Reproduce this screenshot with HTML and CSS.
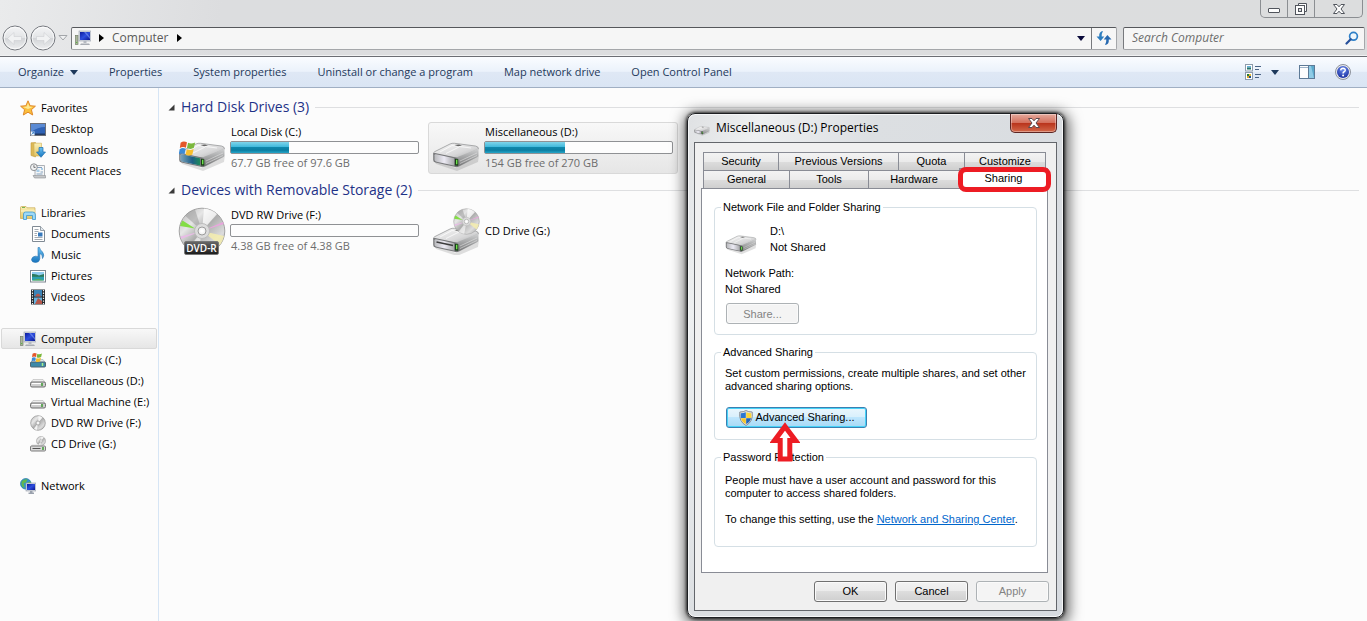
FILE: index.html
```html
<!DOCTYPE html>
<html lang="en">
<head>
    <meta charset="UTF-8">
    <meta name="viewport" content="width=device-width, initial-scale=1.0">
    <title>Computer</title>
    <link rel="stylesheet" href="styles.css">
</head>
<body>
    <!-- Shared icons and gradients -->
    <svg class="sprite" aria-hidden="true">
        <defs>
            <linearGradient id="gMetal" x1="0" y1="0" x2="1" y2="1">
                <stop offset="0" stop-color="#f8f8f8"/>
                <stop offset="0.6" stop-color="#d8d8d9"/>
                <stop offset="1" stop-color="#a5a6a7"/>
            </linearGradient>
            <linearGradient id="gSide" x1="0" y1="0" x2="0" y2="1">
                <stop offset="0" stop-color="#d2d3d4"/>
                <stop offset="1" stop-color="#707172"/>
            </linearGradient>
            <linearGradient id="gFront" x1="0" y1="0" x2="1" y2="0">
                <stop offset="0" stop-color="#b9babd"/>
                <stop offset="0.5" stop-color="#eceaf4"/>
                <stop offset="1" stop-color="#a9aaac"/>
            </linearGradient>
            <linearGradient id="gTeal" x1="0" y1="0" x2="1" y2="0">
                <stop offset="0" stop-color="#7ba3bb"/>
                <stop offset="0.6" stop-color="#1e5f86"/>
                <stop offset="1" stop-color="#1d8a5c"/>
            </linearGradient>
            <linearGradient id="gDisc" x1="0" y1="0" x2="1" y2="1">
                <stop offset="0" stop-color="#b4b4b4"/>
                <stop offset="0.3" stop-color="#e6e6e6"/>
                <stop offset="0.5" stop-color="#aeaeae"/>
                <stop offset="0.75" stop-color="#dcdcdc"/>
                <stop offset="1" stop-color="#9c9c9c"/>
            </linearGradient>
            <linearGradient id="gBlue" x1="0" y1="0" x2="1" y2="1">
                <stop offset="0" stop-color="#0b1a9c"/>
                <stop offset="0.5" stop-color="#2d4ede"/>
                <stop offset="1" stop-color="#0b1792"/>
            </linearGradient>
            <linearGradient id="gFolder" x1="0" y1="0" x2="0" y2="1">
                <stop offset="0" stop-color="#fbf0b5"/>
                <stop offset="1" stop-color="#e3c566"/>
            </linearGradient>
            <linearGradient id="gSky" x1="0" y1="0" x2="0" y2="1">
                <stop offset="0" stop-color="#6cc3f3"/>
                <stop offset="1" stop-color="#1774bd"/>
            </linearGradient>
            <linearGradient id="gNav" x1="0" y1="0" x2="0" y2="1">
                <stop offset="0" stop-color="#f4f5f6"/>
                <stop offset="0.5" stop-color="#e2e4e6"/>
                <stop offset="0.52" stop-color="#d3d5d8"/>
                <stop offset="1" stop-color="#eff0f1"/>
            </linearGradient>
            <radialGradient id="gHelp" cx="0.5" cy="0.3" r="0.7">
                <stop offset="0" stop-color="#6d8ff0"/>
                <stop offset="1" stop-color="#1a2fa0"/>
            </radialGradient>
        </defs>

        <symbol id="flag" viewBox="0 0 16 16">
            <path d="M1.5 2.5C3.5 1 5.500 1 7.500 2.200L6.500 7.300C4.500 6.200 2.600 6.300.8 7.600Z" fill="#e4572a"/>
            <path d="M8.500 2.600C10.500 3.700 12.700 3.600 15.200 2.300L14 7.400C11.800 8.700 9.500 8.600 7.500 7.600Z" fill="#7bb83c"/>
            <path d="M.6 8.700C2.500 7.300 4.300 7.300 6.300 8.300L5.200 13.400C3.400 12.300 1.500 12.500-.3 13.700Z" fill="#3c8bd6"/>
            <path d="M7.300 8.700C9.300 9.700 11.400 9.800 13.800 8.500L12.600 13.600C10.400 14.900 8.200 14.800 6.200 13.800Z" fill="#f7bf2e"/>
        </symbol>

        <symbol id="drive-large" viewBox="0 0 48 48">
            <path d="M2 36L24 44 47 31 46 38 25 47 4 40Z" fill="#000" opacity="0.12"/>
            <path d="M1.500 30Q1 28.500 3 27.500L18 20Q20 19 22.500 19.300L43.500 22Q46.500 22.500 46.500 25L26 34.500Z" fill="url(#gMetal)" stroke="#8d8e8f" stroke-width="0.7"/>
            <path d="M23 34L46.500 24.500V31Q46.500 32.500 44.500 33.500L27 42.500Q25 43.500 23 43Z" fill="url(#gSide)"/>
            <path d="M1.200 30Q1.200 28.600 3 29L24 33.500Q26 34 26 35.500V41Q26 43.500 23.500 43L3.500 38.500Q1.200 38 1.200 36Z" fill="#77787a"/>
            <path d="M2.500 31.200Q2.500 30 4 30.300L22 34.200V41.500L4.500 37.700Q2.500 37.200 2.500 36Z" fill="url(#gFront)"/>
            <path d="M23 34.800L26.300 35.300V41.800L23 41.400Z" fill="#183f16"/>
            <path d="M24 35.800h1.400v4.500H24z" fill="#6fe04d"/>
            <path d="M8 28L20 21.500 39 24M14 29.500L27 23" fill="none" stroke="#fff" stroke-width="0.900" opacity="0.800"/>
            <path d="M22.500 21L27 20.600 30 21.400 26 22.300Z" fill="#666"/>
            <path d="M28 37L45 29M28 39.500L45 31.500" stroke="#e6e6e6" stroke-width="0.800" opacity="0.700"/>
        </symbol>

        <symbol id="drive-windows-large" viewBox="0 0 48 48">
            <use href="#drive-large"/>
            <path d="M2.500 31.200Q2.500 30 4 30.300L22 34.200V41.500L4.500 37.700Q2.500 37.200 2.500 36Z" fill="url(#gTeal)"/>
            <use href="#flag" x="1" y="16" width="17" height="17"/>
        </symbol>

        <symbol id="disc" viewBox="0 0 48 48">
            <circle cx="24" cy="24" r="22.800" fill="url(#gDisc)" stroke="#9b9b9b" stroke-width="0.900"/>
            <path d="M24 24L7 8.500A23 23 0 0 1 17 2.500Z" fill="#8d8d8d" opacity="0.450"/>
            <path d="M24 24L26 1.500A23 23 0 0 1 39 7Z" fill="#fff" opacity="0.750"/>
            <path d="M17 21.500L2 19A23 23 0 0 1 4.500 13.500Z" fill="#83dd45"/>
            <path d="M24 24L45 15 45.800 17Z" fill="#e9a5dd"/>
            <path d="M24 24L46 29A23 23 0 0 1 42 38Z" fill="#f4edae" opacity="0.850"/>
            <path d="M24 24L3 32 2.500 29.500Z" fill="#e8bce6"/>
            <path d="M24 24L10 42A23 23 0 0 0 20 46.400Z" fill="#fff" opacity="0.600"/>
            <circle cx="24" cy="24" r="7.500" fill="#dcdcdc" stroke="#bcbcbc"/>
            <circle cx="24" cy="24" r="4" fill="#f4f4f4" stroke="#9c9c9c"/>
            <circle cx="24" cy="24" r="1.800" fill="#fff"/>
        </symbol>

        <symbol id="cd-drive-large" viewBox="0 0 48 48">
            <use href="#drive-large" y="2"/>
            <path d="M4.500 35L21 38.500" stroke="#3c3c3c" stroke-width="1.600"/>
            <use href="#disc" x="21" y="1" width="27" height="27"/>
        </symbol>

        <symbol id="drive" viewBox="0 0 16 16">
            <path d="M3 6.500H13L15.500 10H.5Z" fill="#eeeeee" stroke="#b5b5b5" stroke-width="0.600"/>
            <rect x="0.500" y="9" width="15" height="5" rx="1.500" fill="#cfcfcf" stroke="#6f6f6f"/>
            <path d="M2 10.500h9" stroke="#fff"/>
            <path d="M12 10v3" stroke="#3e9a35" stroke-width="1.500"/>
        </symbol>

        <symbol id="drive-windows" viewBox="0 0 16 16">
            <path d="M3 7.500H13L15.500 11H.5Z" fill="#dfe6ea" stroke="#9fb0ba" stroke-width="0.600"/>
            <rect x="0.500" y="10" width="15" height="5" rx="1" fill="#3c89a8" stroke="#4f6470"/>
            <path d="M12.500 11v3" stroke="#a8f08d" stroke-width="1.500"/>
            <use href="#flag" x="1.500" y="0" width="11" height="11"/>
        </symbol>

        <symbol id="disc-small" viewBox="0 0 16 16">
            <circle cx="8" cy="8" r="7.300" fill="url(#gDisc)" stroke="#8f8f8f" stroke-width="0.700"/>
            <path d="M8 8L8.500 1A7 7 0 0 1 12.500 2.500ZM8 8L4 13.800A7 7 0 0 0 7 15Z" fill="#fff" opacity="0.800"/>
            <circle cx="8" cy="8" r="2" fill="#f6f6f6" stroke="#9c9c9c" stroke-width="0.800"/>
        </symbol>

        <symbol id="cd-drive" viewBox="0 0 16 16">
            <use href="#disc-small" x="6" y="0" width="10" height="10"/>
            <path d="M2 8.500H9L15.500 10.500H.5Z" fill="#e4e4e4"/>
            <rect x="0.500" y="10" width="15" height="5" rx="1" fill="#dadada" stroke="#7d7d7d"/>
            <path d="M2.500 12.500h8" stroke="#555"/>
            <path d="M13 11v3" stroke="#3e9a35" stroke-width="1.500"/>
        </symbol>

        <symbol id="computer" viewBox="0 0 16 16">
            <rect x="0.500" y="5.500" width="2.500" height="9" fill="#a9b49c" stroke="#75806a" stroke-width="0.700"/>
            <path d="M1.200 12.500h1" stroke="#4dbb32"/>
            <rect x="4" y="1" width="12" height="10" fill="#d5d9e0" stroke="#9aa1ad" stroke-width="0.600"/>
            <rect x="5" y="2" width="10" height="8" fill="url(#gBlue)"/>
            <path d="M9 2L11 2 15 7V9Z" fill="#7f9bf5" opacity="0.600"/>
            <path d="M8.500 11h3v2h-3z" fill="#b5b9c0"/>
            <path d="M6 13.500h8l1 1.500H5z" fill="#a8acb3"/>
        </symbol>

        <symbol id="star" viewBox="0 0 16 16">
            <path d="M8 .8L10.100 5.700 15.400 6.200 11.400 9.700 12.700 15 8 12.200 3.300 15 4.600 9.700.6 6.200 5.900 5.700Z" fill="#fbbf3c" stroke="#e0892a" stroke-width="1"/>
            <path d="M8 3L9.300 6.600 13 7 8 9 3 7 6.700 6.600Z" fill="#fdf0a3" opacity="0.850"/>
        </symbol>

        <symbol id="desktop" viewBox="0 0 16 16">
            <rect x="0.500" y="2.500" width="15" height="12" fill="#2f62b5" stroke="#6d7078"/>
            <path d="M1 3H15V6Q8 6 1 11Z" fill="#6e9be0" opacity="0.700"/>
            <path d="M5 12.500H15V14H5z" fill="#233b62"/>
            <path d="M.8 10.500h3.700v4H.8z" fill="#eef5fc"/>
            <path d="M1.500 13.500L3.800 11.300M2.200 11.200h1.700v1.700" fill="none" stroke="#2976c4" stroke-width="0.800"/>
        </symbol>

        <symbol id="downloads" viewBox="0 0 16 16">
            <path d="M1 .8L5.500.5V15L1 13.500Z" fill="#ddb956" stroke="#c39c3c" stroke-width="0.600"/>
            <path d="M4 1.200H11.500V14H4Z" fill="url(#gFolder)" stroke="#cfae55" stroke-width="0.600"/>
            <path d="M9 5.500H13V10H15.500L11 15.300 6.500 10H9Z" fill="url(#gSky)" stroke="#1c6eaf" stroke-width="0.700"/>
        </symbol>

        <symbol id="recent" viewBox="0 0 16 16">
            <path d="M5 2.500h9.500v11H5z" fill="#f5f6f7" stroke="#9aa0a6" stroke-width="0.800"/>
            <path d="M6.500 6.500h3v2.500h-3zM11 5h2v2h-2z" fill="#a8cde9"/>
            <path d="M7 4.500h5M10.500 9h2.500M6.500 11h6" stroke="#7997b5" stroke-width="0.900"/>
            <path d="M3 12.500h12.500v2.500H4.500z" fill="#c5c7c9" stroke="#8c8f92" stroke-width="0.600"/>
            <circle cx="3.900" cy="4.200" r="3.400" fill="#f1f2f3" stroke="#8c8f92"/>
            <path d="M3.900 2.200v2.200h1.700" fill="none" stroke="#555" stroke-width="0.800"/>
        </symbol>

        <symbol id="libraries" viewBox="0 0 16 16">
            <path d="M.5 2.500Q.5 1.500 1.500 1.500H6L7 2.800H15V13.500H.5Z" fill="url(#gFolder)" stroke="#c9a94f" stroke-width="0.700"/>
            <path d="M2 2.500h3" stroke="#77b454"/>
            <path d="M1 6H15" stroke="#fff7cf"/>
            <path d="M3.500 14.500V9Q3.500 7 5.500 7H12.500Q14.800 7 15.300 9L15.500 14.500H12.500V10.500H6.500V14.500Z" fill="#9dd9f7" stroke="#3c97cf" stroke-width="0.800"/>
        </symbol>

        <symbol id="documents" viewBox="0 0 16 16">
            <path d="M2.500.5H10.500L14.500 4.500V15.500H2.500Z" fill="#fff" stroke="#808a94"/>
            <path d="M10.500.5V4.500H14.500" fill="#e4e9ee" stroke="#808a94" stroke-width="0.800"/>
            <path d="M4.500 3.500h4M4.500 5.500h4M4.500 7.500h2.500M4.500 9.500h2.500M4.500 11.500h8M4.500 13.500h8" stroke="#9aa3ab" stroke-width="0.900"/>
            <path d="M8 6.500h4.500v4H8z" fill="#3779bc"/>
        </symbol>

        <symbol id="music" viewBox="0 0 16 16">
            <path d="M8 .5H9.500Q10 3 12.500 5Q15 8 12.500 11.500Q13 7.500 9.800 6.500V11.800Q9.500 15.500 5.500 15.500Q1.500 15.300 1.500 12.500Q2 9.500 5.500 9.200Q7 9.200 8 9.800Z" fill="url(#gSky)" stroke="#2672b2" stroke-width="0.600"/>
        </symbol>

        <symbol id="pictures" viewBox="0 0 16 16">
            <rect x="0.500" y="2.500" width="15" height="11.500" fill="#fff" stroke="#808891"/>
            <path d="M2 4h12v4.500H2z" fill="#8fcbee"/>
            <path d="M2 6Q6 5.500 9 7.500L14 6V9H2Z" fill="#2c7a5c"/>
            <path d="M2 8.800h12v3.700H2z" fill="#2d9fae"/>
            <path d="M2 12.500Q8 9.500 14 12.500Z" fill="#5fae54"/>
        </symbol>

        <symbol id="videos" viewBox="0 0 16 16">
            <rect x="1" y="0.500" width="14" height="15" fill="#22282d"/>
            <path d="M4 1h8v6.500H4z" fill="#3b84b8"/>
            <path d="M4 8.500h8V15H4z" fill="#68b3dd"/>
            <path d="M5 7.500Q8 1.500 11 7.500ZM8 9L12 12V15H5Z" fill="#b5584c"/>
            <path d="M2.500 1v15M13.500 1v15" stroke="#f2f2f2" stroke-width="1.200" stroke-dasharray="1.300 1.300"/>
        </symbol>

        <symbol id="network" viewBox="0 0 16 16">
            <circle cx="5.800" cy="5.800" r="5.300" fill="#3193cc" stroke="#2177a5" stroke-width="0.700"/>
            <path d="M2 3Q5 .5 7.500 1.500L6 4.500 3.500 5.500 4.500 9 3 9.500Q.5 6.500 2 3ZM8 4L10.500 3.500 11 6 8 8Z" fill="#62b84c"/>
            <rect x="6" y="5" width="10" height="8" fill="#d5d9e0" stroke="#8f97a5" stroke-width="0.600"/>
            <path d="M7 6h8v6H7z" fill="url(#gBlue)"/>
            <path d="M10 13h2.500v1.500H14V16H8.500V14.500H10z" fill="#9aa1ad"/>
        </symbol>

        <symbol id="shield" viewBox="0 0 16 16">
            <path d="M8 .6Q10.500 2 14.200 2Q15.500 11.500 8 15.500Q.5 11.500 1.800 2Q5.500 2 8 .6Z" fill="#e4e6e8" stroke="#80868b" stroke-width="0.900"/>
            <path d="M7.800 2.200V7.900H2.800Q2.500 5.500 2.800 3.300Q5.500 3.300 7.800 2.200Z" fill="#2a77d2"/>
            <path d="M8.200 2.200Q10.500 3.300 13.200 3.300Q13.500 5.500 13.200 7.900H8.200Z" fill="#fbd53a"/>
            <path d="M2.900 8.300H7.800V14.100Q3.800 12 2.900 8.300Z" fill="#f6c62a"/>
            <path d="M8.200 8.300H13.100Q12.200 12 8.200 14.100Z" fill="#2263bb"/>
        </symbol>
    </svg>

    <!-- Window frame with the address and search boxes -->
    <header class="frame">
        <div class="caption-buttons">
            <button type="button" aria-label="Minimize">
                <svg width="14" height="8" viewBox="0 0 14 8"><rect x="1.500" y="3.500" width="11" height="4" rx="0.500" fill="#fdfdfd" stroke="#50545c"/></svg>
            </button>
            <button type="button" aria-label="Restore">
                <svg width="14" height="14" viewBox="0 0 14 14"><path d="M4.500 3.500V1.500H12.500V9.500H10.500" fill="#fdfdfd" stroke="#50545c"/><rect x="1.500" y="3.500" width="9" height="9" fill="#fdfdfd" stroke="#50545c"/><rect x="4.500" y="6.500" width="3" height="3" fill="#dcdddf" stroke="#50545c"/></svg>
            </button>
            <button type="button" class="caption-close" aria-label="Close">
                <svg width="14" height="12" viewBox="0 0 14 12"><path d="M1.500 1.500H5L7 3.800 9 1.500H12.500L9 6 12.500 10.500H9L7 8.200 5 10.500H1.500L5 6Z" fill="#fdfdfd" stroke="#50545c"/></svg>
            </button>
        </div>

        <div class="address-row">
            <div class="nav-buttons">
                <button type="button" aria-label="Back">
                    <svg width="26" height="26" viewBox="0 0 26 26"><circle cx="13" cy="13" r="12" fill="url(#gNav)" stroke="#777a80"/><circle cx="13" cy="13" r="10.800" fill="none" stroke="#fff" opacity="0.700"/><path d="M5.500 13.500L12 7.500V11.500H19.500V15.500H12V19.500Z" fill="#f1f2f3" stroke="#c9cbce" stroke-width="0.500"/></svg>
                </button>
                <button type="button" aria-label="Forward">
                    <svg width="26" height="26" viewBox="0 0 26 26"><circle cx="13" cy="13" r="12" fill="url(#gNav)" stroke="#777a80"/><circle cx="13" cy="13" r="10.800" fill="none" stroke="#fff" opacity="0.700"/><path d="M20.500 13.500L14 7.500V11.500H6.500V15.500H14V19.500Z" fill="#f1f2f3" stroke="#c9cbce" stroke-width="0.500"/></svg>
                </button>
                <button type="button" class="nav-recent" aria-label="Recent pages">
                    <svg width="10" height="8" viewBox="0 0 10 8"><path d="M1 1.500H9L5 6Z" fill="#f0f1f2" stroke="#a3a6aa"/></svg>
                </button>
            </div>

            <div class="address-box">
                <svg class="icon" aria-hidden="true"><use href="#computer"/></svg>
                <svg class="crumb-arrow" viewBox="0 0 5 8" aria-hidden="true"><path d="M0 0L5 4 0 8Z"/></svg>
                <button type="button" class="crumb">Computer</button>
                <svg class="crumb-arrow" viewBox="0 0 5 8" aria-hidden="true"><path d="M0 0L5 4 0 8Z"/></svg>
                <button type="button" class="address-drop" aria-label="Previous locations">
                    <svg width="8" height="5" viewBox="0 0 8 5"><path d="M0 0H8L4 5Z" fill="#0a0a3a"/></svg>
                </button>
                <button type="button" class="refresh" aria-label="Refresh">
                    <svg width="16" height="14" viewBox="0 0 16 14"><path d="M7 0Q2.800.5 3.200 5.500H.5L4.600 10 8.300 5.500H5.700Q5.500 2.500 7 0Z" fill="#2c7dbf"/><path d="M9 14Q13.200 13.500 12.800 8.500H15.500L11.400 4 7.700 8.500H10.300Q10.500 11.500 9 14Z" fill="#2769b0"/></svg>
                </button>
            </div>

            <label class="search-box">
                <input type="text" placeholder="Search Computer" aria-label="Search Computer">
                <svg width="14" height="14" viewBox="0 0 14 14" aria-hidden="true"><circle cx="8.500" cy="5.300" r="3.900" fill="#eef6fc" stroke="#2f80c8" stroke-width="1.700"/><path d="M5.700 8.200L1.500 12.500" stroke="#27509a" stroke-width="2.200" stroke-linecap="round"/></svg>
            </label>
        </div>
    </header>

    <!-- Command bar -->
    <nav class="toolbar">
        <button type="button" class="organize">Organize
            <svg width="8" height="5" viewBox="0 0 8 5" aria-hidden="true"><path d="M0 0H8L4 5Z" fill="#1e395b"/></svg>
        </button>
        <button type="button">Properties</button>
        <button type="button">System properties</button>
        <button type="button">Uninstall or change a program</button>
        <button type="button">Map network drive</button>
        <button type="button">Open Control Panel</button>
        <div class="toolbar-right">
            <button type="button" class="views" aria-label="Change your view">
                <svg width="16" height="16" viewBox="0 0 16 16"><rect x="0.500" y="0.500" width="7" height="6.500" fill="#fff" stroke="#8d9bab"/><path d="M2 2h4v1.500H2z" fill="#63b0da"/><path d="M2 3.500h4v2H2z" fill="#27756b"/><rect x="0.500" y="8.500" width="7" height="7" fill="#fff" stroke="#8d9bab"/><path d="M2 10h2v2H2z" fill="#267a37"/><path d="M4 10h2v2H4z" fill="#e8b930"/><path d="M2 12h2v2H2z" fill="#dda32c"/><path d="M4 12h2v2H4z" fill="#1d4d87"/><path d="M10 2.500h6M10 5.500h4M10 10.500h6M10 13.500h4" stroke="#4a6385"/></svg>
                <svg width="8" height="5" viewBox="0 0 8 5"><path d="M0 0H8L4 5Z" fill="#1e395b"/></svg>
            </button>
            <button type="button" aria-label="Show the preview pane">
                <svg width="16" height="14" viewBox="0 0 16 14"><rect x="0.500" y="0.500" width="15" height="13" fill="#fdfdfe" stroke="#5d7a97"/><path d="M1 2.500h9" stroke="#9db4ca"/><path d="M10 1h5v12h-5z" fill="#8fcbe6"/><path d="M9.500 1v12" stroke="#5d7a97"/><path d="M12 1L15 1V13Z" fill="#5ba9cc"/></svg>
            </button>
            <button type="button" aria-label="Get help">
                <svg width="16" height="16" viewBox="0 0 16 16"><circle cx="8" cy="8" r="7.500" fill="#e7e9ee" stroke="#8d929c"/><circle cx="8" cy="8" r="6" fill="url(#gHelp)"/><path d="M5.700 6.400Q5.800 4.200 8 4.200 10.300 4.300 10.200 6.300 10 7.500 8.800 8 8.100 8.400 8.100 9.400" fill="none" stroke="#fff" stroke-width="1.500"/><circle cx="8.100" cy="11.500" r="1" fill="#fff"/></svg>
            </button>
        </div>
    </nav>

    <main class="explorer">
        <!-- Navigation pane -->
        <aside class="sidebar">
            <ul>
                <li><a href="#"><svg class="icon"><use href="#star"/></svg>Favorites</a></li>
                <li class="child"><a href="#"><svg class="icon"><use href="#desktop"/></svg>Desktop</a></li>
                <li class="child"><a href="#"><svg class="icon"><use href="#downloads"/></svg>Downloads</a></li>
                <li class="child"><a href="#"><svg class="icon"><use href="#recent"/></svg>Recent Places</a></li>
            </ul>
            <ul>
                <li><a href="#"><svg class="icon"><use href="#libraries"/></svg>Libraries</a></li>
                <li class="child"><a href="#"><svg class="icon"><use href="#documents"/></svg>Documents</a></li>
                <li class="child"><a href="#"><svg class="icon"><use href="#music"/></svg>Music</a></li>
                <li class="child"><a href="#"><svg class="icon"><use href="#pictures"/></svg>Pictures</a></li>
                <li class="child"><a href="#"><svg class="icon"><use href="#videos"/></svg>Videos</a></li>
            </ul>
            <ul>
                <li class="current"><a href="#"><svg class="icon"><use href="#computer"/></svg>Computer</a></li>
                <li class="child"><a href="#"><svg class="icon"><use href="#drive-windows"/></svg>Local Disk (C:)</a></li>
                <li class="child"><a href="#"><svg class="icon"><use href="#drive"/></svg>Miscellaneous (D:)</a></li>
                <li class="child"><a href="#"><svg class="icon"><use href="#drive"/></svg>Virtual Machine (E:)</a></li>
                <li class="child"><a href="#"><svg class="icon"><use href="#disc-small"/></svg>DVD RW Drive (F:)</a></li>
                <li class="child"><a href="#"><svg class="icon"><use href="#cd-drive"/></svg>CD Drive (G:)</a></li>
            </ul>
            <ul>
                <li><a href="#"><svg class="icon"><use href="#network"/></svg>Network</a></li>
            </ul>
        </aside>

        <!-- Drives -->
        <section class="content">
            <h2 class="group-title">
                <svg width="7" height="7" viewBox="0 0 7 7" aria-hidden="true"><path d="M6.500 .5V6.500H.5Z" fill="#3a3a3a"/></svg>
                Hard Disk Drives (3)
            </h2>
            <div class="drives">
                <div class="drive">
                    <svg class="drive-icon"><use href="#drive-windows-large"/></svg>
                    <div class="drive-info">
                        <div class="drive-name">Local Disk (C:)</div>
                        <div class="bar"><div class="bar-fill" style="width: 31%"></div></div>
                        <div class="drive-free">67.7 GB free of 97.6 GB</div>
                    </div>
                </div>
                <div class="drive selected">
                    <svg class="drive-icon"><use href="#drive-large"/></svg>
                    <div class="drive-info">
                        <div class="drive-name">Miscellaneous (D:)</div>
                        <div class="bar"><div class="bar-fill" style="width: 43%"></div></div>
                        <div class="drive-free">154 GB free of 270 GB</div>
                    </div>
                </div>
            </div>

            <h2 class="group-title">
                <svg width="7" height="7" viewBox="0 0 7 7" aria-hidden="true"><path d="M6.500 .5V6.500H.5Z" fill="#3a3a3a"/></svg>
                Devices with Removable Storage (2)
            </h2>
            <div class="drives">
                <div class="drive">
                    <div class="dvd">
                        <svg class="drive-icon"><use href="#disc"/></svg>
                        <span class="dvd-label">DVD-R</span>
                    </div>
                    <div class="drive-info">
                        <div class="drive-name">DVD RW Drive (F:)</div>
                        <div class="bar"></div>
                        <div class="drive-free">4.38 GB free of 4.38 GB</div>
                    </div>
                </div>
                <div class="drive">
                    <svg class="drive-icon"><use href="#cd-drive-large"/></svg>
                    <div class="drive-info">
                        <div class="drive-name">CD Drive (G:)</div>
                    </div>
                </div>
            </div>
        </section>
    </main>

    <!-- Properties dialog -->
    <div class="dialog" role="dialog" aria-labelledby="dialogTitle">
        <div class="dialog-title">
            <svg class="icon"><use href="#drive-large"/></svg>
            <span id="dialogTitle">Miscellaneous (D:) Properties</span>
            <button type="button" class="dialog-close" aria-label="Close">
                <svg width="14" height="12" viewBox="0 0 14 12"><path d="M1.500 1.500H5L7 3.800 9 1.500H12.500L9 6 12.500 10.500H9L7 8.200 5 10.500H1.500L5 6Z" fill="#fff" stroke="#5b4a4e"/></svg>
            </button>
        </div>

        <div class="dialog-body">
            <div class="tabs" role="tablist">
                <div class="tab-row back-row">
                    <button type="button" role="tab">Security</button>
                    <button type="button" role="tab">Previous Versions</button>
                    <button type="button" role="tab">Quota</button>
                    <button type="button" role="tab">Customize</button>
                </div>
                <div class="tab-row front-row">
                    <button type="button" role="tab">General</button>
                    <button type="button" role="tab">Tools</button>
                    <button type="button" role="tab">Hardware</button>
                    <button type="button" role="tab" class="active" aria-selected="true">Sharing</button>
                </div>
            </div>

            <div class="panel" role="tabpanel">
                <fieldset class="network-group">
                    <legend>Network File and Folder Sharing</legend>
                    <div class="share-status">
                        <svg class="share-icon"><use href="#drive-large"/></svg>
                        <div>D:\<br>Not Shared</div>
                    </div>
                    <p class="path">Network Path:<br>Not Shared</p>
                    <button type="button" class="win-button" disabled>Share...</button>
                </fieldset>

                <fieldset class="advanced-group">
                    <legend>Advanced Sharing</legend>
                    <p>Set custom permissions, create multiple shares, and set other advanced sharing options.</p>
                    <div class="advanced-action">
                        <button type="button" class="win-button default-button"><svg class="icon"><use href="#shield"/></svg>Advanced Sharing...</button>
                        <svg class="arrow-mark" viewBox="0 0 30 40" aria-hidden="true"><path d="M15 4.500L25.500 18.500H19.800V37H10.200V18.500H4.500Z" fill="#fff" stroke="#ed1c24" stroke-width="5"/></svg>
                    </div>
                </fieldset>

                <fieldset class="password-group">
                    <legend>Password Protection</legend>
                    <p>People must have a user account and password for this<br>computer to access shared folders.</p>
                    <p>To change this setting, use the <a href="#">Network and Sharing Center</a>.</p>
                </fieldset>
            </div>

            <div class="dialog-actions">
                <button type="button" class="win-button">OK</button>
                <button type="button" class="win-button">Cancel</button>
                <button type="button" class="win-button" disabled>Apply</button>
            </div>
        </div>
    </div>
</body>
</html>
```
FILE: styles.css
```css
* {
    box-sizing: border-box;
}

body {
    margin: 0;
    min-height: 100vh;
    display: flex;
    flex-direction: column;
    background-color: #fcfcfc;
    color: #000;
    font-family: 'Open Sans', 'Noto Sans', sans-serif;
    font-size: 11px;
    line-height: 16px;
    overflow: hidden;
}

button {
    margin: 0;
    padding: 0;
    border: none;
    background: none;
    color: inherit;
    font: inherit;
}

svg {
    display: block;
    flex: none;
}

.sprite {
    position: absolute;
    width: 0;
    height: 0;
}

.icon {
    width: 16px;
    height: 16px;
}

/* Window frame */
.frame {
    background: linear-gradient(100deg, #eaebec 0, #dcdddf 220px, #dcddde 100%);
    border-bottom: 1px solid #6b6d73;
    box-shadow: inset 0 -1px #f0f1f2;
    font-size: 12px;
}

.caption-buttons {
    display: flex;
    width: 103px;
    height: 18px;
    margin: 0 4px 0 auto;
    border: 1px solid #8b8e92;
    border-top: none;
    border-radius: 0 0 5px 5px;
}

.caption-buttons button {
    width: 27px;
    display: flex;
    align-items: center;
    justify-content: center;
    border-right: 1px solid #8b8e92;
}

.caption-buttons .caption-close {
    flex: 1;
    border-right: none;
}

.address-row {
    display: flex;
    align-items: center;
    padding: 7px 2px 5px;
}

.nav-buttons {
    display: flex;
    align-items: center;
    gap: 2px;
    margin-right: 3px;
}

.nav-buttons button {
    border-radius: 13px;
}

.address-box,
.search-box {
    display: flex;
    align-items: center;
    height: 23px;
    background-color: #f6f6f6;
    border: 1px solid #a5a7aa;
    border-top-color: #55575b;
    border-left-color: #77797d;
    border-radius: 2px;
}

.address-box {
    flex: 1;
    padding-left: 3px;
    color: #5a5a5a;
}

.crumb-arrow {
    width: 5px;
    height: 8px;
    margin: 0 8px;
}

.address-drop {
    height: 100%;
    margin-left: auto;
    padding: 0 6px;
}

.refresh {
    height: 100%;
    padding: 0 4px;
    border-left: 1px solid #77797d;
}

.search-box {
    width: 242px;
    margin-left: 6px;
    padding: 0 5px 0 8px;
}

.search-box input {
    flex: 1;
    min-width: 0;
    padding: 0;
    border: none;
    outline: none;
    background: none;
    font: inherit;
    font-style: italic;
}

.search-box input::placeholder {
    color: #6d6d6d;
}

/* Command bar */
.toolbar {
    display: flex;
    align-items: center;
    gap: 31px;
    height: 31px;
    padding: 0 16px 0 18px;
    background: linear-gradient(#fafcff 0, #ebf2fb 48%, #dfe8f5 50%, #dae5f4 100%);
    border-bottom: 1px solid #a0afc3;
    color: #1e395b;
}

.organize,
.views {
    display: flex;
    align-items: center;
    gap: 6px;
}

.toolbar-right {
    display: flex;
    align-items: center;
    gap: 20px;
    margin-left: auto;
}

.views {
    gap: 10px;
}

/* Navigation pane */
.explorer {
    flex: 1;
    display: flex;
}

.sidebar {
    width: 159px;
    padding: 9px 1px 0;
    border-right: 1px solid #d6e5f5;
}

.sidebar ul {
    margin: 0 0 21px;
    padding: 0;
    list-style: none;
}

.sidebar a {
    display: flex;
    align-items: center;
    gap: 5px;
    height: 21px;
    padding-left: 19px;
    color: #000;
    text-decoration: none;
    white-space: nowrap;
}

.sidebar .child a {
    padding-left: 29px;
}

.sidebar .current a {
    padding-left: 18px;
    border: 1px solid #d9d9d9;
    border-radius: 2px;
    background: linear-gradient(#f8f8f8, #e6e6e6);
}

/* Drives */
.content {
    flex: 1;
    padding: 9px 0 0 9px;
}

.group-title {
    display: flex;
    align-items: center;
    gap: 6px;
    margin: 0;
    color: #1e3287;
    font-size: 14px;
    font-weight: 400;
    line-height: 20px;
}

.group-title::after {
    content: "";
    flex: 1;
    height: 1px;
    margin-right: 8px;
    background-color: #dedfe1;
}

.drives {
    display: grid;
    grid-template-columns: repeat(auto-fill, 250px);
    gap: 4px;
    padding: 5px 0 6px 6px;
}

.drive {
    display: flex;
    align-items: center;
    gap: 4px;
    height: 52px;
    padding: 0 4px 0 3px;
    border: 1px solid transparent;
    border-radius: 3px;
}

.drive.selected {
    border-color: #d9d9d9;
    background: linear-gradient(#f8f8f8, #e6e6e6);
}

.drive-icon {
    width: 48px;
    height: 48px;
}

.drive-info {
    flex: 1;
}

.drive-name {
    padding: 0 0 1px 1px;
}

.drive-free {
    padding: 1px 0 2px 1px;
    color: #6d6d6d;
}

.bar {
    height: 13px;
    border: 1px solid #8f9194;
    border-radius: 2px;
    background-color: #fdfdfd;
}

.bar-fill {
    height: 100%;
    background: linear-gradient(#7fd4ea 0, #3fb9dc 45%, #0f87ab 50%, #0a7ea2 75%, #25a5c8 100%);
}

.dvd {
    position: relative;
}

.dvd-label {
    position: absolute;
    left: 6px;
    bottom: 0;
    width: 35px;
    border: 1px solid #777;
    border-radius: 2px;
    background: linear-gradient(#666, #1c1c1c);
    color: #fff;
    font-size: 10px;
    font-weight: 600;
    line-height: 12px;
    text-align: center;
}

/* Properties dialog */
.dialog {
    position: absolute;
    top: 113px;
    left: 687px;
    width: 377px;
    padding: 0 6px 6px;
    border: 1px solid #1d1f22;
    border-radius: 8px;
    background: linear-gradient(110deg, #dfe1e3 0, #eef0f1 70px, #dcdfe2 180px, #d7dbe0 100%);
    box-shadow: inset 0 0 0 1px #f5f6f7, 0 0 3px 1px rgba(0, 0, 0, 0.7), 1px 3px 14px 4px rgba(0, 0, 0, 0.6);
}

.dialog-title {
    display: flex;
    align-items: center;
    gap: 6px;
    height: 28px;
    font-size: 12px;
}

.dialog-title #dialogTitle {
    flex: 1;
}

.dialog-close {
    display: flex;
    align-items: center;
    justify-content: center;
    width: 47px;
    height: 19px;
    align-self: flex-start;
    border: 1px solid #5c2523;
    border-top: none;
    border-radius: 0 0 5px 5px;
    background: linear-gradient(#e5aa9d 0, #d4705d 48%, #b8321a 50%, #d2684a 100%);
    box-shadow: inset 0 0 0 1px rgba(255, 255, 255, 0.35);
}

.dialog-body {
    padding: 9px 8px 8px 6px;
    border: 1px solid #63666b;
    background-color: #f0f0f0;
    font-family: 'Liberation Sans', Arial, sans-serif;
    font-size: 11px;
    line-height: 13px;
}

.tabs {
    padding: 0 2px;
}

.tab-row {
    display: grid;
    height: 18px;
}

.back-row {
    grid-template-columns: 75fr 120fr 66fr 82fr;
}

.front-row {
    grid-template-columns: 86fr 79fr 91fr 87fr;
}

.tab-row button {
    border: 1px solid #898c95;
    border-bottom: none;
    border-right-width: 0;
    background: linear-gradient(#f3f3f3 0, #ebebeb 50%, #dddddd 52%, #cfcfcf 100%);
}

.tab-row button:last-child {
    border-right-width: 1px;
}

.tab-row .active {
    position: relative;
    margin: -2px -2px -1px 0;
    background: #fff;
    padding-bottom: 1px;
}

/* Highlight round the open tab */
.tab-row .active::after {
    content: "";
    position: absolute;
    inset: -2px -4px -3px -2px;
    border: 5px solid #ed1c24;
    border-radius: 8px;
}

.panel {
    padding: 12px 10px 25px 12px;
    border: 1px solid #898c95;
    background-color: #fff;
}

fieldset {
    margin: 0;
    padding: 0 10px;
    border: 1px solid #d5dfe5;
    border-radius: 4px;
}

fieldset + fieldset {
    margin-top: 11px;
}

legend {
    margin-left: -4px;
    padding: 0 2px;
    line-height: 13px;
}

fieldset p {
    margin: 0;
}

fieldset .win-button {
    margin-left: 1px;
}

.network-group {
    padding-bottom: 10px;
    line-height: 16px;
}

.share-status {
    display: flex;
    align-items: flex-end;
    gap: 13px;
    padding-top: 9px;
}

.share-icon {
    width: 32px;
    height: 32px;
}

.path {
    padding: 10px 0 6px;
}

.advanced-group {
    padding-bottom: 11px;
}

.advanced-group p {
    padding: 8px 0 14px;
}

.password-group {
    padding-bottom: 20px;
}

.password-group p {
    padding-top: 10px;
}

.password-group p + p {
    padding-top: 13px;
}

.password-group a {
    color: #0066cc;
}

.win-button {
    display: flex;
    align-items: center;
    justify-content: center;
    width: 73px;
    height: 21px;
    border: 1px solid #707070;
    border-radius: 3px;
    background: linear-gradient(#f2f2f2 0, #ebebeb 48%, #dddddd 50%, #cfcfcf 100%);
    box-shadow: inset 0 0 0 1px #fafafa;
}

.win-button:disabled {
    border-color: #adb2b5;
    background: #f4f4f4;
    color: #838383;
}

.default-button {
    width: 141px;
    gap: 1px;
    border-color: #3c7fb1;
    background: linear-gradient(#eaf6fd 0, #d9f0fc 48%, #bee6fd 50%, #a7d9f5 100%);
    box-shadow: inset 0 0 0 1px #46d3f8;
}

.advanced-action {
    position: relative;
}

/* Arrow pointing at the button */
.arrow-mark {
    position: absolute;
    top: 15px;
    left: 45px;
    width: 30px;
    height: 40px;
}

.dialog-actions {
    display: flex;
    justify-content: flex-end;
    gap: 8px;
    margin-right: -1px;
    padding-top: 8px;
}
```
